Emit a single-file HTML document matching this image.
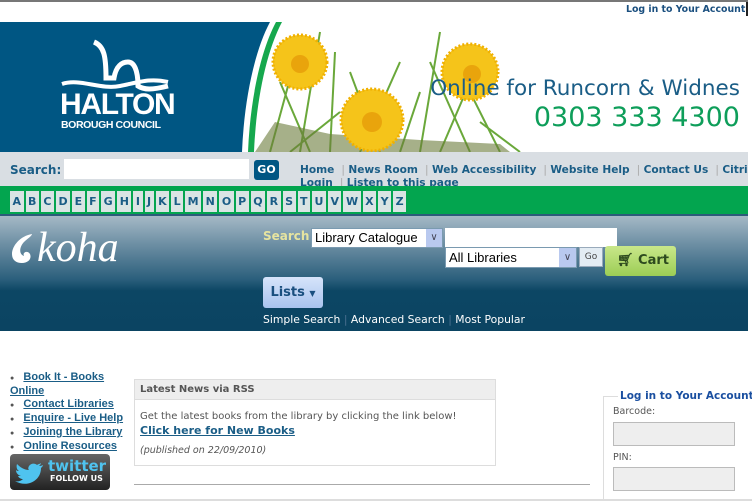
<!DOCTYPE html>
<html><head><meta charset="utf-8"><style>
*{margin:0;padding:0;box-sizing:border-box}
body{width:752px;height:501px;overflow:hidden;background:#fff;font-family:"Liberation Sans","DejaVu Sans",sans-serif;position:relative}
.abs{position:absolute;white-space:nowrap}
a{color:#1a5d86;text-decoration:underline}
.v{font-family:"DejaVu Sans",sans-serif}
</style></head><body>
<div class="abs" style="left:0;top:0;width:752px;height:2px;background:#777"></div>
<div class="abs" style="left:746px;top:2px;width:2px;height:14px;background:#222"></div>
<div class="abs v" style="left:626px;top:4px;font-size:9.4px;font-weight:bold;color:#1a4f7f">Log in to Your Account</div>
<!-- banner -->
<div class="abs" style="left:0;top:22px;width:748px;height:130px;overflow:hidden;background:#fff">
<svg width="748" height="130" style="position:absolute;left:0;top:0">
<g stroke="#6aa83a" stroke-width="2" fill="none">
<path d="M270 130L300 20"/><path d="M300 130L320 10"/><path d="M330 130L335 30"/><path d="M360 130L400 40"/><path d="M420 130L440 10"/><path d="M440 130L470 60"/><path d="M470 130L430 40"/><path d="M500 130L470 70"/><path d="M380 130L350 50"/><path d="M290 130L340 90"/><path d="M310 130L280 60"/><path d="M520 130L480 100"/><path d="M400 130L420 70"/>
</g>
<path d="M255 130L275 100L330 112L420 118L500 122L510 130Z" fill="#6b7b3a" opacity=".6"/>
<g fill="#f5c41a" stroke="#f0b000" stroke-width="3" stroke-dasharray="2 2"><circle cx="300" cy="40" r="27"/><circle cx="372" cy="98" r="31"/><circle cx="470" cy="50" r="28"/></g>
<g fill="#e9a40c"><circle cx="300" cy="42" r="9"/><circle cx="372" cy="100" r="10"/><circle cx="472" cy="52" r="9"/></g>
<path d="M0 0H278C262 30 252 80 250 130H0Z" fill="#005683"/>
<path d="M270 0H278C262 30 252 80 250 130H242C244 80 254 30 270 0Z" fill="#fff"/>
<path d="M276 0H282C266 30 256 80 254 130H248C250 80 260 30 276 0Z" fill="#16a84e"/>
</svg>
<svg class="abs" style="left:60px;top:16px" width="110" height="60"><path d="M34 4C44 8 46 18 46 40L54 40C56 28 62 24 68 24C74 24 78 32 78 48C84 52 92 52 108 48" stroke="#fff" stroke-width="5" fill="none"/><path d="M2 46C20 40 40 52 60 48S90 40 108 44" stroke="#fff" stroke-width="4" fill="none"/></svg>
<div class="abs" style="left:60px;top:66px;color:#fff;font-size:30px;font-weight:bold;letter-spacing:-1.3px">HALTON</div>
<div class="abs" style="left:61px;top:97px;color:#fff;font-size:10.5px;font-weight:bold;letter-spacing:-.4px">BOROUGH COUNCIL</div>
<div class="abs v" style="right:8px;top:54px;font-size:21.5px;color:#1a5d86">Online for Runcorn &amp; Widnes</div>
<div class="abs v" style="right:8px;top:80px;font-size:27px;color:#0e9e5a">0303 333 4300</div>
</div>
<!-- search bar -->
<div class="abs" style="left:0;top:152px;width:748px;height:34px;background:#d9dee3"></div>
<div class="abs v" style="left:10px;top:163px;font-size:12px;font-weight:bold;color:#1a5d86">Search:</div>
<div class="abs" style="left:64px;top:159px;width:185px;height:20px;background:#fff"></div>
<div class="abs v" style="left:254px;top:160px;width:25px;height:20px;background:#005683;border-radius:3px;color:#fff;font-size:11px;font-weight:bold;text-align:center;line-height:20px">GO</div>
<div class="abs v" style="left:300px;top:164px;font-size:10.6px;font-weight:bold;color:#1a5d86;width:448px;overflow:hidden">Home <span style="color:#aaa;font-weight:normal">&nbsp;|&nbsp;</span>News Room <span style="color:#aaa;font-weight:normal">&nbsp;|&nbsp;</span>Web Accessibility <span style="color:#aaa;font-weight:normal">&nbsp;|&nbsp;</span>Website Help <span style="color:#aaa;font-weight:normal">&nbsp;|&nbsp;</span>Contact Us <span style="color:#aaa;font-weight:normal">&nbsp;|&nbsp;</span>Citrix</div>
<div class="abs v" style="left:300px;top:177px;height:9px;overflow:hidden;font-size:10.6px;font-weight:bold;color:#1a5d86">Login <span style="color:#aaa;font-weight:normal">&nbsp;|&nbsp;</span>Listen to this page</div>
<!-- alpha -->
<div class="abs" style="left:0;top:186px;width:748px;height:29px;background:#03a54f"></div>
<div class="abs v" style="left:10px;top:191px;display:flex;gap:2px">
<script>document.write("ABCDEFGHIJKLMNOPQRSTUVWXYZ".split("").map(c=>'<span style="display:block;height:21px;background:#d9e4e4;color:#1a5d86;font-size:11px;font-weight:bold;line-height:21px;padding:0 2.5px">'+c+'</span>').join(""))</script>
</div>
<div class="abs" style="left:0;top:214px;width:748px;height:2px;background:#2c5b7a"></div>
<!-- koha -->
<div class="abs" style="left:0;top:216px;width:748px;height:115px;background:linear-gradient(#a5b9c6 0%,#6c8ea3 25%,#2b5f7c 55%,#0c4664 65%,#0b4462 100%)"></div>
<svg class="abs" style="left:10px;top:232px" width="28" height="32"><path d="M22 2C10 4 2 14 2 22C2 28 6 31 12 31C18 31 22 27 20 22C18 18 12 20 14 24C8 22 10 14 14 10C17 7 22 4 22 2Z" fill="#fff"/></svg>
<div class="abs" style="left:37px;top:224px;color:#fff;font-family:'Liberation Serif',serif;font-style:italic;font-size:42px;line-height:48px">koha</div>
<div class="abs v" style="left:263px;top:229px;font-size:12px;font-weight:bold;color:#e6e4a0">Search</div>
<div class="abs" style="left:311px;top:228px;width:132px;height:20px;background:#fff;border:1px solid #7a9ab0;font-size:13px;line-height:18px;padding-left:3px">Library Catalogue</div>
<div class="abs" style="left:426px;top:229px;width:16px;height:18px;background:#b9c9ef;color:#445;font-size:10px;text-align:center;line-height:18px">&#x2228;</div>
<div class="abs" style="left:445px;top:228px;width:172px;height:19px;background:#fff"></div>
<div class="abs" style="left:445px;top:247px;width:132px;height:21px;background:#fff;border:1px solid #7a9ab0;font-size:13px;line-height:19px;padding-left:3px">All Libraries</div>
<div class="abs" style="left:559px;top:248px;width:17px;height:19px;background:#b9c9ef;color:#445;font-size:10px;text-align:center;line-height:19px">&#x2228;</div>
<div class="abs v" style="left:579px;top:247px;width:24px;height:20px;background:#e3ecf3;border:1px solid #9ab;font-size:9px;text-align:center;line-height:18px;color:#444">Go</div>
<div class="abs v" style="left:605px;top:246px;width:71px;height:30px;background:linear-gradient(#c9e78a,#9ccd55);border-radius:3px;color:#2d4a1e;font-size:13px;font-weight:bold;line-height:30px;padding-left:12px">&#x1F6D2;&#xFE0E; Cart</div>
<div class="abs v" style="left:263px;top:277px;width:60px;height:31px;background:linear-gradient(#d6e4fa,#a9c3ee);border-radius:3px;color:#1a4f7f;font-size:13px;font-weight:bold;line-height:31px;text-align:center">Lists <span style="font-size:8px">&#9660;</span></div>
<div class="abs v" style="left:263px;top:313px;font-size:10.8px;color:#fff">Simple Search <span style="color:#4a7090">|</span> Advanced Search <span style="color:#4a7090">|</span> Most Popular</div>
<div class="abs" style="left:748px;top:0;width:4px;height:501px;background:#fff"></div>
<!-- bottom -->
<div class="abs" style="left:10px;top:371px;font-size:11px;line-height:13px;font-weight:bold;width:125px;white-space:normal">
<div><span style="color:#555;font-size:7px">&#9679;</span>&nbsp;&nbsp; <a>Book It - Books Online</a></div>
<div><span style="color:#555;font-size:7px">&#9679;</span>&nbsp;&nbsp; <a>Contact Libraries</a></div>
<div><span style="color:#555;font-size:7px">&#9679;</span>&nbsp;&nbsp; <a>Enquire - Live Help</a></div>
<div><span style="color:#555;font-size:7px">&#9679;</span>&nbsp;&nbsp; <a>Joining the Library</a></div>
<div><span style="color:#555;font-size:7px">&#9679;</span>&nbsp;&nbsp; <a>Online Resources</a></div>
</div>
<div class="abs" style="left:10px;top:454px;width:100px;height:36px;background:linear-gradient(#666,#222);border-radius:4px"></div>
<svg class="abs" style="left:15px;top:461px" width="30" height="24"><path d="M28 4C26 5 25 5 24 5C25 4 26 3 26 2C25 3 23 3 22 4C20 2 16 2 14 5C13 7 13 8 14 9C9 9 5 6 2 3C1 6 2 9 4 10C3 10 2 10 1 9C1 12 3 14 6 15C5 15 4 15 3 15C4 17 6 18 8 18C6 20 3 21 0 20C12 27 26 20 26 7C27 6 28 5 28 4Z" fill="#4fc3ef"/></svg>
<div class="abs v" style="left:48px;top:457px;color:#4fc3ef;font-size:15px;font-weight:bold">twitter</div>
<div class="abs v" style="left:50px;top:474px;color:#fff;font-size:8px;font-weight:bold">FOLLOW US</div>
<div class="abs" style="left:134px;top:379px;width:362px;height:87px;border:1px solid #ddd"></div>
<div class="abs v" style="left:135px;top:380px;width:360px;height:20px;background:#eee;border-bottom:1px solid #ddd;font-size:10px;font-weight:bold;color:#555;line-height:20px;padding-left:5px">Latest News via RSS</div>
<div class="abs v" style="left:140px;top:411px;font-size:10px;color:#555">Get the latest books from the library by clicking the link below!</div>
<div class="abs v" style="left:140px;top:424px;font-size:11px;font-weight:bold"><a>Click here for New Books</a></div>
<div class="abs v" style="left:140px;top:445px;font-size:9.5px;font-style:italic;color:#555">(published on 22/09/2010)</div>
<div class="abs" style="left:134px;top:484px;width:456px;height:1px;background:#aaa"></div>
<div class="abs" style="left:603px;top:396px;width:1px;height:105px;background:#ddd"></div>
<div class="abs" style="left:603px;top:396px;width:15px;height:1px;background:#ddd"></div>
<div class="abs v" style="left:620px;top:390px;font-size:10.5px;font-weight:bold;color:#1a4fa0">Log in to Your Account:</div>
<div class="abs v" style="left:613px;top:406px;font-size:9.5px;color:#555">Barcode:</div>
<div class="abs" style="left:613px;top:422px;width:122px;height:24px;background:#eee;border:1px solid #bbb"></div>
<div class="abs v" style="left:613px;top:452px;font-size:9.5px;color:#555">PIN:</div>
<div class="abs" style="left:613px;top:467px;width:122px;height:24px;background:#eee;border:1px solid #bbb"></div>
<div class="abs" style="left:0;top:499px;width:752px;height:2px;background:#ddd"></div>
</body></html>
